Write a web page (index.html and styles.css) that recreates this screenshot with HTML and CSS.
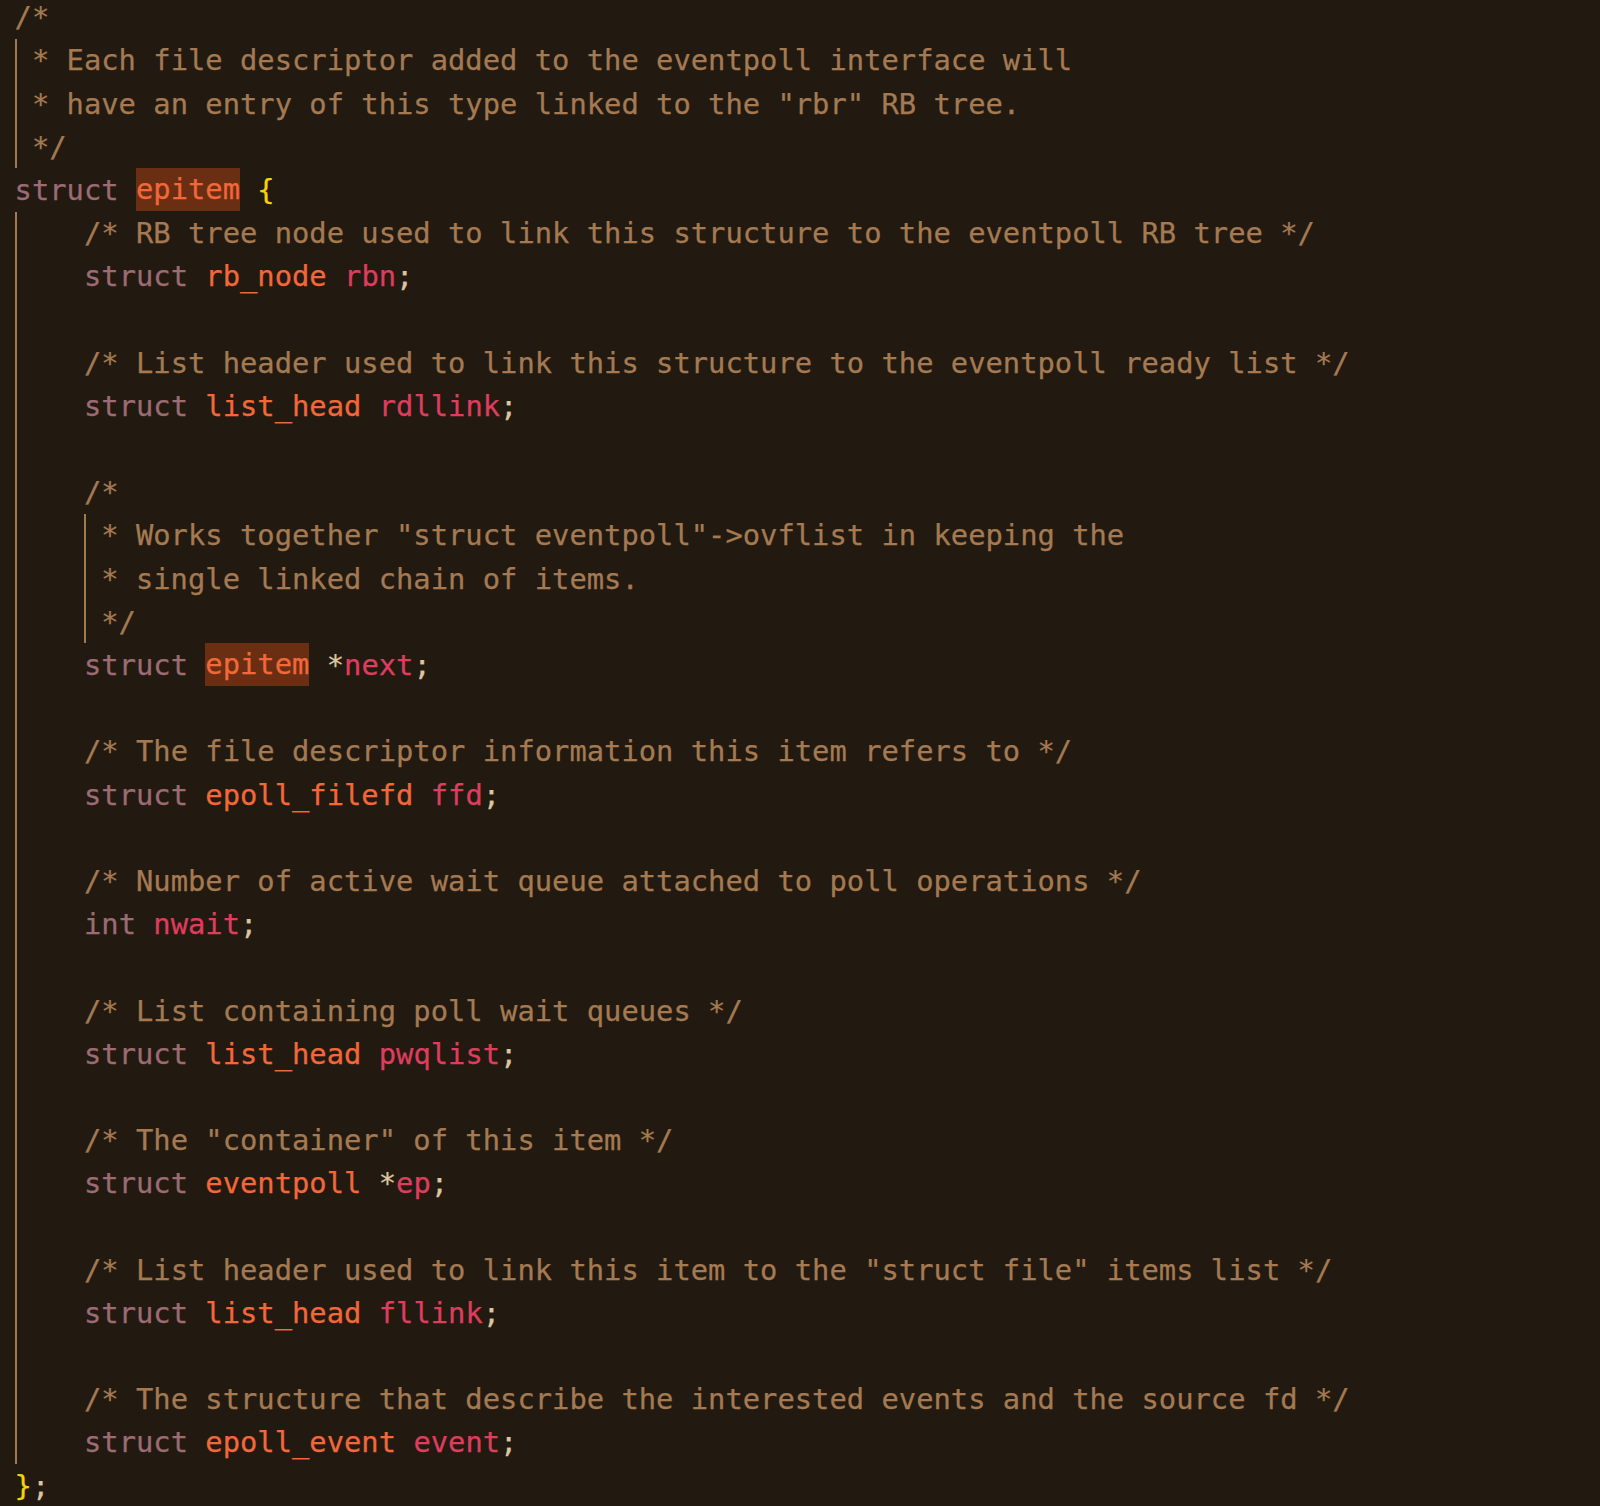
FILE: index.html
```html
<!DOCTYPE html>
<html>
<head>
<meta charset="utf-8">
<link rel="stylesheet" href="styles.css">
</head>
<body>
<div class="code">
<div class="ln"><span class="c">/*</span></div>
<div class="guide">
<div class="ln"><span class="c"> * Each file descriptor added to the eventpoll interface will</span></div>
<div class="ln"><span class="c"> * have an entry of this type linked to the "rbr" RB tree.</span></div>
<div class="ln"><span class="c"> */</span></div>
</div>
<div class="ln"><span class="k">struct</span> <span class="t hl">epitem</span> <span class="b">{</span></div>
<div class="guide">
<div class="ln">    <span class="c">/* RB tree node used to link this structure to the eventpoll RB tree */</span></div>
<div class="ln">    <span class="k">struct</span> <span class="t">rb_node</span> <span class="v">rbn</span><span class="p">;</span></div>
<div class="ln"> </div>
<div class="ln">    <span class="c">/* List header used to link this structure to the eventpoll ready list */</span></div>
<div class="ln">    <span class="k">struct</span> <span class="t">list_head</span> <span class="v">rdllink</span><span class="p">;</span></div>
<div class="ln"> </div>
<div class="ln">    <span class="c">/*</span></div>
<div class="guide inner">
<div class="ln"><span class="c"> * Works together "struct eventpoll"-&gt;ovflist in keeping the</span></div>
<div class="ln"><span class="c"> * single linked chain of items.</span></div>
<div class="ln"><span class="c"> */</span></div>
</div>
<div class="ln">    <span class="k">struct</span> <span class="t hl">epitem</span> <span class="p">*</span><span class="v">next</span><span class="p">;</span></div>
<div class="ln"> </div>
<div class="ln">    <span class="c">/* The file descriptor information this item refers to */</span></div>
<div class="ln">    <span class="k">struct</span> <span class="t">epoll_filefd</span> <span class="v">ffd</span><span class="p">;</span></div>
<div class="ln"> </div>
<div class="ln">    <span class="c">/* Number of active wait queue attached to poll operations */</span></div>
<div class="ln">    <span class="k">int</span> <span class="v">nwait</span><span class="p">;</span></div>
<div class="ln"> </div>
<div class="ln">    <span class="c">/* List containing poll wait queues */</span></div>
<div class="ln">    <span class="k">struct</span> <span class="t">list_head</span> <span class="v">pwqlist</span><span class="p">;</span></div>
<div class="ln"> </div>
<div class="ln">    <span class="c">/* The "container" of this item */</span></div>
<div class="ln">    <span class="k">struct</span> <span class="t">eventpoll</span> <span class="p">*</span><span class="v">ep</span><span class="p">;</span></div>
<div class="ln"> </div>
<div class="ln">    <span class="c">/* List header used to link this item to the "struct file" items list */</span></div>
<div class="ln">    <span class="k">struct</span> <span class="t">list_head</span> <span class="v">fllink</span><span class="p">;</span></div>
<div class="ln"> </div>
<div class="ln">    <span class="c">/* The structure that describe the interested events and the source fd */</span></div>
<div class="ln">    <span class="k">struct</span> <span class="t">epoll_event</span> <span class="v">event</span><span class="p">;</span></div>
</div>
<div class="ln"><span class="b">}</span><span class="p">;</span></div>
</div>
</body>
</html>
```
FILE: styles.css
```css
html, body {
  margin: 0;
  padding: 0;
  background: #221a10;
}
body {
  width: 1600px;
  height: 1506px;
  overflow: hidden;
}
.code {
  font-family: "DejaVu Sans Mono", "Liberation Mono", monospace;
  font-size: 28.8px;
  line-height: 43.2px;
  margin-top: -3.8px;
  padding-left: 14.6px;
  color: #d9c4a0;
  -webkit-text-stroke: 0.25px currentColor;
}
.ln {
  white-space: pre;
  height: 43.2px;
}
.guide {
  background: linear-gradient(#a27850, #a27850) no-repeat 0 -1px / 2px 100%;
}
.guide.inner {
  margin-left: 4ch;
}
.c { color: #a57a52; }
.k { color: #9c6b73; }
.t { color: #f2683a; }
.v { color: #df3d5e; }
.b { color: #f7d20a; }
.p { color: #dcc5a0; }
.hl {
  display: inline-block;
  vertical-align: top;
  height: 43.2px;
  margin-top: -1px;
  background: #6a2e12;
}
```
